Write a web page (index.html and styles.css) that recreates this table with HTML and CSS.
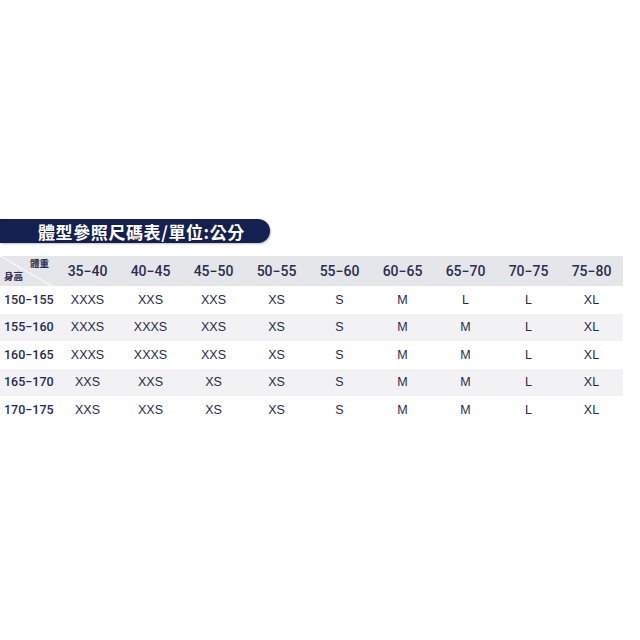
FILE: index.html
```html
<!DOCTYPE html>
<html lang="zh-Hant">
<head>
<meta charset="utf-8">
<link rel="stylesheet" href="styles.css">
</head>
<body>
<div class="page">
  <div class="banner"><span class="banner-text">體型參照尺碼表/單位:公分</span></div>
  <div class="table">
    <div class="row head">
      <div class="cell corner">
        <svg class="diag" width="56" height="30" viewBox="0 0 56 30"><line x1="0" y1="0" x2="52" y2="30" stroke="#ffffff" stroke-width="1"/></svg>
        <span class="c-top">體重</span>
        <span class="c-bot">身高</span>
      </div>
      <div class="cell">35−40</div>
      <div class="cell">40−45</div>
      <div class="cell">45−50</div>
      <div class="cell">50−55</div>
      <div class="cell">55−60</div>
      <div class="cell">60−65</div>
      <div class="cell">65−70</div>
      <div class="cell">70−75</div>
      <div class="cell">75−80</div>
    </div>
    <div class="row">
      <div class="cell first">150−155</div>
      <div class="cell">XXXS</div><div class="cell">XXS</div><div class="cell">XXS</div><div class="cell">XS</div><div class="cell">S</div><div class="cell">M</div><div class="cell">L</div><div class="cell">L</div><div class="cell">XL</div>
    </div>
    <div class="row alt">
      <div class="cell first">155−160</div>
      <div class="cell">XXXS</div><div class="cell">XXXS</div><div class="cell">XXS</div><div class="cell">XS</div><div class="cell">S</div><div class="cell">M</div><div class="cell">M</div><div class="cell">L</div><div class="cell">XL</div>
    </div>
    <div class="row">
      <div class="cell first">160−165</div>
      <div class="cell">XXXS</div><div class="cell">XXXS</div><div class="cell">XXS</div><div class="cell">XS</div><div class="cell">S</div><div class="cell">M</div><div class="cell">M</div><div class="cell">L</div><div class="cell">XL</div>
    </div>
    <div class="row alt">
      <div class="cell first">165−170</div>
      <div class="cell">XXS</div><div class="cell">XXS</div><div class="cell">XS</div><div class="cell">XS</div><div class="cell">S</div><div class="cell">M</div><div class="cell">M</div><div class="cell">L</div><div class="cell">XL</div>
    </div>
    <div class="row">
      <div class="cell first">170−175</div>
      <div class="cell">XXS</div><div class="cell">XXS</div><div class="cell">XS</div><div class="cell">XS</div><div class="cell">S</div><div class="cell">M</div><div class="cell">M</div><div class="cell">L</div><div class="cell">XL</div>
    </div>
  </div>
</div>
</body>
</html>
```
FILE: styles.css
```css
html, body {
  margin: 0;
  padding: 0;
  background: #ffffff;
}
.page {
  width: 640px;
  height: 640px;
  padding-top: 219px;
  box-sizing: border-box;
  font-family: "Liberation Sans", "Noto Sans CJK TC", sans-serif;
  color: #272a4e;
}
.banner {
  width: 270px;
  height: 24px;
  background: #14204f;
  border-radius: 0 12px 12px 0;
  box-shadow: 1px 1px 2px rgba(0,0,0,0.25);
  display: flex;
  align-items: center;
  padding-left: 38px;
  box-sizing: border-box;
}
.banner-text {
  font-family: "Noto Sans CJK TC", sans-serif;
  font-weight: 700;
  font-size: 17px;
  line-height: 1;
  color: #ffffff;
  letter-spacing: 0.6px;
}
.table {
  margin-top: 13px;
  width: 623px;
}
.row {
  display: grid;
  grid-template-columns: 56px repeat(9, 63px);
  height: 27.6px;
  align-items: center;
}
.row.alt {
  background: #f2f2f4;
}
.row.head {
  height: 30px;
  background: #e5e6e9;
}
.cell {
  text-align: center;
  font-size: 12.5px;
  line-height: 1;
}
.head .cell {
  font-family: "Roboto", "Liberation Sans", sans-serif;
  font-size: 14px;
  font-weight: 500;
  color: #2a2d52;
}
.cell.first {
  text-align: left;
  padding-left: 4px;
  font-family: "Roboto", "Liberation Sans", sans-serif;
  font-weight: 500;
  font-size: 12.5px;
}
.head .cell.corner {
  position: relative;
  height: 30px;
  align-self: stretch;
}
.diag {
  position: absolute;
  left: 0;
  top: 0;
}
.c-top, .c-bot {
  position: absolute;
  font-family: "Noto Sans CJK TC", sans-serif;
  font-size: 9.5px;
  font-weight: 700;
  line-height: 1;
  color: #2a2d52;
}
.c-top {
  left: 30px;
  top: 3px;
}
.c-bot {
  left: 4px;
  top: 16px;
}
```
